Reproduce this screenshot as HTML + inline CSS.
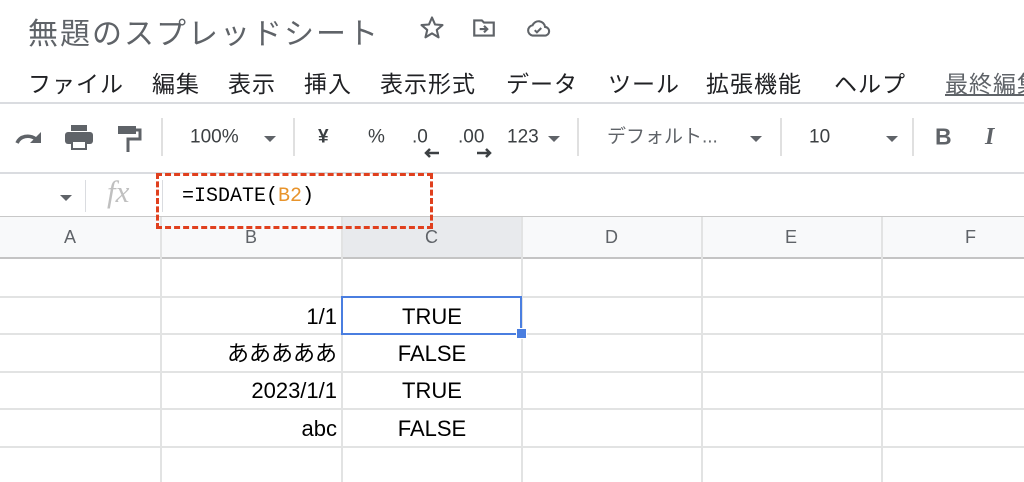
<!DOCTYPE html>
<html><head><meta charset="utf-8"><style>
*{margin:0;padding:0;box-sizing:border-box}
body{width:1024px;height:482px;overflow:hidden;background:#fff;position:relative;font-family:"Liberation Sans","Noto Sans CJK JP",sans-serif}
.a{position:absolute;white-space:nowrap}
.hl{position:absolute;left:0;width:1024px;height:2px;background:#e2e3e3}
.vl{position:absolute;width:2px;background:#e2e3e3}
.tb{position:absolute;top:137px;font-size:19px;color:#3c4043;line-height:1;transform:translateY(-50%)}
.tri{position:absolute;width:0;height:0;border-left:6px solid transparent;border-right:6px solid transparent;border-top:6px solid #5f6368}
.sep{position:absolute;top:118px;width:2px;height:38px;background:#e0e0e0}
.ch{position:absolute;top:227px;font-size:18px;color:#5f6368}
.c{position:absolute;font-size:22px;color:#000;line-height:1}
</style></head><body>
<div class="a" style="left:28px;top:9px;font-size:30px;letter-spacing:2px;color:#5f6368">無題のスプレッドシート</div>
<svg class="a" style="left:418px;top:14px" width="28" height="28" viewBox="0 0 24 24"><path d="M12 3l2.6 6 6.4.5-4.9 4.2 1.5 6.3L12 16.6 6.4 20l1.5-6.3L3 9.5l6.4-.5z" fill="none" stroke="#5f6368" stroke-width="1.8" stroke-linejoin="round"/></svg>
<svg class="a" style="left:471px;top:15px" width="26" height="26" viewBox="0 0 24 24"><path d="M3 5h7l2 2h9v12H3z" fill="none" stroke="#5f6368" stroke-width="2"/><path d="M8 13h7M12 10l3 3-3 3" fill="none" stroke="#5f6368" stroke-width="2"/></svg>
<svg class="a" style="left:524px;top:15px" width="28" height="26" viewBox="0 0 24 24"><path d="M7 19h11a4 4 0 0 0 .5-8A6 6 0 0 0 7 9.5 4.8 4.8 0 0 0 7 19z" fill="none" stroke="#5f6368" stroke-width="1.9"/><path d="M9 14l2 2 4-4" fill="none" stroke="#5f6368" stroke-width="1.9"/></svg>
<div class="a" style="left:28px;top:65px;font-size:23px;letter-spacing:1px;color:#202124">
<span style="position:absolute;left:0">ファイル</span><span style="position:absolute;left:124px">編集</span><span style="position:absolute;left:200px">表示</span><span style="position:absolute;left:276px">挿入</span><span style="position:absolute;left:352px">表示形式</span><span style="position:absolute;left:478px">データ</span><span style="position:absolute;left:580px">ツール</span><span style="position:absolute;left:678px">拡張機能</span><span style="position:absolute;left:806px">ヘルプ</span><span style="position:absolute;left:917px;color:#5f6368;text-decoration:underline">最終編集</span></div>
<div class="hl" style="top:102px;background:#dadce0"></div>
<svg class="a" style="left:14px;top:128px" width="30" height="18" viewBox="0 0 30 18"><path d="M3 15c3-7 12-9 19-4" fill="none" stroke="#5f6368" stroke-width="3.5"/><path d="M27 4v11H16z" fill="#5f6368"/></svg>
<svg class="a" style="left:64px;top:124px" width="30" height="28" viewBox="0 0 30 28"><rect x="7" y="1" width="16" height="6" fill="#5f6368"/><rect x="1" y="8" width="28" height="12" rx="3" fill="#5f6368"/><rect x="7" y="16" width="16" height="10" fill="#5f6368"/><rect x="9" y="18" width="12" height="6" fill="#fff"/></svg>
<svg class="a" style="left:116px;top:124px" width="26" height="30" viewBox="0 0 26 30"><rect x="2" y="2" width="18" height="8" fill="#5f6368"/><path d="M20 6h4v9H12v13" fill="none" stroke="#5f6368" stroke-width="3"/></svg>
<div class="sep" style="left:161px"></div>
<div class="tb" style="left:190px">100%</div><div class="tri" style="left:264px;top:136px"></div>
<div class="sep" style="left:293px"></div>
<div class="tb" style="left:318px;font-weight:bold">¥</div>
<div class="tb" style="left:368px">%</div>
<div class="tb" style="left:412px">.0</div>
<svg class="a" style="left:424px;top:148px" width="16" height="10" viewBox="0 0 16 10"><path d="M15 5H3M6 1L2 5l4 4" fill="none" stroke="#3c4043" stroke-width="2.5"/></svg>
<div class="tb" style="left:458px">.00</div>
<svg class="a" style="left:476px;top:148px" width="16" height="10" viewBox="0 0 16 10"><path d="M1 5h12M10 1l4 4-4 4" fill="none" stroke="#3c4043" stroke-width="2.5"/></svg>
<div class="tb" style="left:507px">123</div><div class="tri" style="left:548px;top:136px"></div>
<div class="sep" style="left:577px"></div>
<div class="tb" style="left:607px;color:#5f6368">デフォルト...</div><div class="tri" style="left:750px;top:136px"></div>
<div class="sep" style="left:780px"></div>
<div class="tb" style="left:809px">10</div><div class="tri" style="left:886px;top:136px"></div>
<div class="sep" style="left:912px"></div>
<div class="tb" style="left:935px;font-weight:bold;font-size:23px;color:#5f6368">B</div>
<div class="tb" style="left:985px;font-weight:bold;font-style:italic;font-size:24px;color:#5f6368;font-family:'Liberation Serif',serif">I</div>
<div class="hl" style="top:172px;background:#dadce0"></div>
<div class="tri" style="left:60px;top:195px"></div>
<div class="a" style="left:85px;top:180px;width:1px;height:32px;background:#dadce0"></div>
<div class="a" style="left:107px;top:174px;font-size:31px;font-style:italic;color:#c0c0c0;font-family:'Liberation Serif',serif">fx</div>
<div class="a" style="left:162px;top:180px;width:1px;height:32px;background:#dadce0"></div>
<div class="a" style="left:182px;top:185px;font-size:20px;color:#000;font-family:'Liberation Mono',monospace">=ISDATE(<span style="color:#e8942c">B2</span>)</div>
<div class="a" style="left:0;top:216px;width:1024px;height:43px;background:#f8f9fa;border-top:1px solid #c8c8c8;border-bottom:2px solid #c4c4c4"></div>
<div class="a" style="left:342px;top:217px;width:179px;height:40px;background:#e8eaed"></div>
<div class="vl" style="left:160px;top:217px;height:265px"></div>
<div class="vl" style="left:341px;top:217px;height:265px"></div>
<div class="vl" style="left:521px;top:217px;height:265px"></div>
<div class="vl" style="left:701px;top:217px;height:265px"></div>
<div class="vl" style="left:881px;top:217px;height:265px"></div>
<div class="ch" style="left:64px">A</div><div class="ch" style="left:245px">B</div><div class="ch" style="left:425px">C</div><div class="ch" style="left:605px">D</div><div class="ch" style="left:785px">E</div><div class="ch" style="left:965px">F</div>
<div class="hl" style="top:296px"></div><div class="hl" style="top:333px"></div><div class="hl" style="top:371px"></div><div class="hl" style="top:408px"></div><div class="hl" style="top:446px"></div>
<div class="c" style="right:687px;top:306px">1/1</div>
<div class="c" style="right:687px;top:343px">あああああ</div>
<div class="c" style="right:687px;top:380px">2023/1/1</div>
<div class="c" style="right:687px;top:418px">abc</div>
<div class="c" style="left:342px;width:180px;text-align:center;top:306px">TRUE</div>
<div class="c" style="left:342px;width:180px;text-align:center;top:343px">FALSE</div>
<div class="c" style="left:342px;width:180px;text-align:center;top:380px">TRUE</div>
<div class="c" style="left:342px;width:180px;text-align:center;top:418px">FALSE</div>
<div class="a" style="left:341px;top:296px;width:181px;height:39px;border:2px solid #4a7ee0"></div>
<div class="a" style="left:516px;top:328px;width:11px;height:11px;background:#4a7ee0;border:1px solid #fff"></div>
<div class="a" style="left:156px;top:173px;width:277px;height:56px;border:3px dashed #e0401e"></div>
</body></html>
